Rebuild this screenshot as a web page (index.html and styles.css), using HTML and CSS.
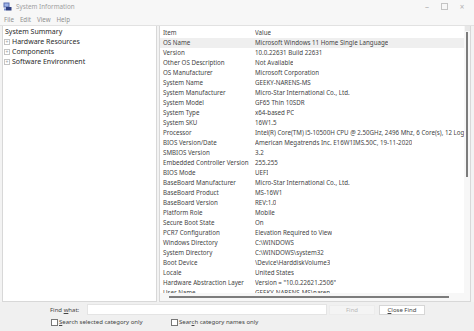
FILE: index.html
```html
<!DOCTYPE html>
<html lang="en">
<head>
    <meta charset="UTF-8">
    <title>System Information</title>
    <link rel="stylesheet" href="styles.css">
</head>
<body>
    <div class="window">
        <!-- Titelleiste -->
        <div class="titlebar">
            <div class="title">
                <svg class="app-icon" width="9" height="9" viewBox="0 0 9 9">
                    <rect x="0.5" y="0.5" width="6" height="5" fill="#5b6fb0"/>
                    <rect x="1.5" y="1.5" width="4" height="3" fill="#9fb4e8"/>
                    <rect x="3" y="5" width="5.5" height="3.5" fill="#2f3f80"/>
                    <rect x="1" y="6.5" width="2" height="2" fill="#7a8fd0"/>
                </svg>
                <span>System Information</span>
            </div>
            <div class="controls">
                <span class="ctl">&#8211;</span>
                <span class="ctl box"></span>
                <span class="ctl">&#215;</span>
            </div>
        </div>

        <!-- Menü -->
        <div class="menubar">
            <span>File</span>
            <span>Edit</span>
            <span>View</span>
            <span>Help</span>
        </div>

        <!-- Hauptbereich -->
        <div class="main">
            <div class="tree">
                <div class="node root">System Summary</div>
                <div class="node"><span class="exp">+</span>Hardware Resources</div>
                <div class="node"><span class="exp">+</span>Components</div>
                <div class="node"><span class="exp">+</span>Software Environment</div>
            </div>

            <div class="details">
                <div class="list">
                    <div class="rows" id="rows">
                        <div class="row head"><span class="c1">Item</span><span class="c2">Value</span></div>
                    </div>
                    <div class="vscroll">
                        <div class="arrow"></div>
                        <div class="thumb"></div>
                    </div>
                </div>
                <div class="hscroll"><div class="hthumb"></div></div>
            </div>
        </div>

        <!-- Suchleiste -->
        <div class="findbar">
            <div class="find-row">
                <label class="find-label">Find <u>w</u>hat:</label>
                <div class="input"></div>
                <div class="btn disabled">Find</div>
                <div class="btn"><u>C</u>lose Find</div>
            </div>
            <div class="check-row">
                <span class="check"><span class="cb"></span><u>S</u>earch selected category only</span>
                <span class="check"><span class="cb"></span>Sear<u>c</u>h category names only</span>
            </div>
        </div>
    </div>

    <script>
        const items = [
            ["OS Name", "Microsoft Windows 11 Home Single Language"],
            ["Version", "10.0.22631 Build 22631"],
            ["Other OS Description", "Not Available"],
            ["OS Manufacturer", "Microsoft Corporation"],
            ["System Name", "GEEKY-NARENS-MS"],
            ["System Manufacturer", "Micro-Star International Co., Ltd."],
            ["System Model", "GF65 Thin 10SDR"],
            ["System Type", "x64-based PC"],
            ["System SKU", "16W1.5"],
            ["Processor", "Intel(R) Core(TM) i5-10500H CPU @ 2.50GHz, 2496 Mhz, 6 Core(s), 12 Logical Processor(s)"],
            ["BIOS Version/Date", "American Megatrends Inc. E16W1IMS.50C, 19-11-2020"],
            ["SMBIOS Version", "3.2"],
            ["Embedded Controller Version", "255.255"],
            ["BIOS Mode", "UEFI"],
            ["BaseBoard Manufacturer", "Micro-Star International Co., Ltd."],
            ["BaseBoard Product", "MS-16W1"],
            ["BaseBoard Version", "REV:1.0"],
            ["Platform Role", "Mobile"],
            ["Secure Boot State", "On"],
            ["PCR7 Configuration", "Elevation Required to View"],
            ["Windows Directory", "C:\\WINDOWS"],
            ["System Directory", "C:\\WINDOWS\\system32"],
            ["Boot Device", "\\Device\\HarddiskVolume3"],
            ["Locale", "United States"],
            ["Hardware Abstraction Layer", "Version = \"10.0.22621.2506\""],
            ["User Name", "GEEKY-NARENS-MS\\naren"]
        ];

        const rows = document.getElementById("rows");
        items.forEach(function (item, i) {
            const row = document.createElement("div");
            row.className = i === 0 ? "row selected" : "row";
            row.innerHTML = '<span class="c1"></span><span class="c2"></span>';
            row.children[0].textContent = item[0];
            row.children[1].textContent = item[1];
            rows.appendChild(row);
        });
    </script>
</body>
</html>
```

FILE: styles.css
```css
/* Allgemein */
body {
    margin: 0;
    padding: 0;
    font-family: 'Noto Sans', sans-serif;
    color: #222;
}

.window {
    width: 474px;
    height: 331px;
    display: flex;
    flex-direction: column;
    background-color: #f3f3f3;
    overflow: hidden;
}

/* Titelleiste */
.titlebar {
    height: 13px;
    display: flex;
    justify-content: space-between;
    align-items: center;
    background-color: #f7f7f7;
}

.title {
    display: flex;
    align-items: center;
    gap: 4px;
    padding-left: 3px;
    font-size: 6.3px;
    color: #a0a0a0;
}

.controls {
    display: flex;
    align-items: center;
    gap: 9px;
    padding-right: 8px;
    font-size: 8px;
    color: #b4b4b4;
}

.ctl {
    width: 8px;
    text-align: center;
    line-height: 8px;
}

.ctl.box {
    width: 5px;
    height: 5px;
    border: 1px solid #c4c4c4;
    margin: 0 1px;
}

/* Menü */
.menubar {
    height: 12px;
    display: flex;
    align-items: center;
    gap: 6px;
    padding-left: 4px;
    font-size: 6.2px;
    color: #909090;
    background-color: #f7f7f7;
    border-bottom: 1px solid #e2e2e2;
}

/* Hauptbereich */
.main {
    flex: 1;
    display: flex;
    gap: 2px;
    padding: 0 3px 0 2px;
    min-height: 0;
}

.tree {
    width: 152px;
    background: white;
    border: 1px solid #d8d8d8;
    border-top: none;
    padding: 1px 0 0 1px;
    font-size: 7px;
    color: #2a2a2a;
}

.node {
    height: 10px;
    line-height: 10px;
    display: flex;
    align-items: center;
    padding-left: 5px;
}

.node.root {
    padding-left: 1px;
}

.exp {
    width: 4px;
    height: 4px;
    border: 1px solid #c4c4c4;
    font-size: 5px;
    line-height: 4px;
    text-align: center;
    color: #9a9a9a;
    margin-right: 2px;
    margin-left: -5px;
    box-sizing: content-box;
}

.details {
    flex: 1;
    display: flex;
    flex-direction: column;
    background: white;
    border: 1px solid #d8d8d8;
    border-top: none;
    min-width: 0;
}

.list {
    flex: 1;
    display: flex;
    min-height: 0;
}

.rows {
    flex: 1;
    overflow: hidden;
    padding-top: 2px;
    font-size: 6.2px;
    color: #444;
}

.row {
    height: 10px;
    line-height: 10px;
    display: flex;
    white-space: nowrap;
}

.row.selected {
    background-color: #efefef;
}

.c1 {
    width: 92px;
    flex-shrink: 0;
    padding-left: 3px;
}

.c2 {
    overflow: hidden;
}

/* Bildlaufleisten */
.vscroll {
    width: 6px;
    display: flex;
    flex-direction: column;
    align-items: center;
    background: #f7f7f7;
}

.arrow {
    width: 5px;
    height: 5px;
    background: #e8e8e8;
}

.thumb {
    width: 2px;
    height: 145px;
    background-color: #7c7c7c;
    margin-top: 1px;
}

.hscroll {
    height: 8px;
    display: flex;
    align-items: center;
    background: #f7f7f7;
}

.hthumb {
    width: 280px;
    height: 2px;
    margin-left: 9px;
    background-color: #7c7c7c;
}

/* Suchleiste */
.findbar {
    height: 27px;
    background-color: #f0f0f0;
    font-size: 6px;
    color: #444;
    padding-top: 2px;
}

.find-row {
    display: flex;
    align-items: center;
    height: 11px;
}

.find-label {
    margin-left: 50px;
    width: 37px;
}

.input {
    width: 238px;
    height: 9px;
    background: white;
    border: 1px solid #e4e4e4;
}

.btn {
    width: 44px;
    height: 8px;
    line-height: 8px;
    margin-left: 4px;
    text-align: center;
    background: white;
    border: 1px solid #d6d6d6;
}

.btn.disabled {
    margin-left: 2px;
    color: #b8b8b8;
    background: #f4f4f4;
    border-color: #ececec;
}

.check-row {
    display: flex;
    align-items: center;
    height: 12px;
    margin-top: 1px;
}

.check {
    display: flex;
    align-items: center;
}

.check:first-child {
    margin-left: 51px;
    width: 120px;
}

.cb {
    width: 5px;
    height: 5px;
    border: 1px solid #777;
    background: white;
    margin-right: 1px;
}
```
